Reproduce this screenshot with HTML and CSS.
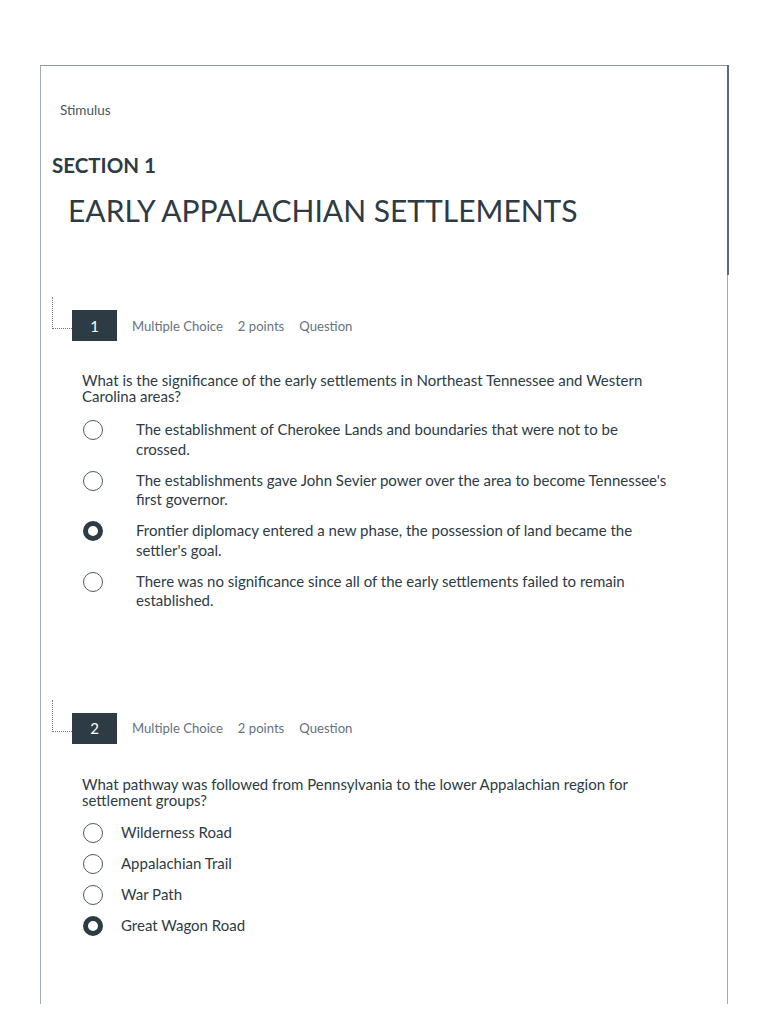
FILE: index.html
```html
<!DOCTYPE html>
<html lang="en">
<head>
<meta charset="utf-8">
<title>Early Appalachian Settlements</title>
<link rel="stylesheet" href="styles.css">
</head>
<body>
<div class="card">
  <div class="stimulus-label">Stimulus</div>
  <h2 class="section-label">SECTION 1</h2>
  <h1 class="section-title">EARLY APPALACHIAN SETTLEMENTS</h1>

  <section class="question q1">
    <div class="q-head">
      <span class="bracket"></span>
      <span class="q-num">1</span>
      <span class="q-meta">Multiple Choice</span>
      <span class="q-meta">2 points</span>
      <span class="q-meta">Question</span>
    </div>
    <p class="q-text">What is the significance of the early settlements in Northeast Tennessee and Western Carolina areas?</p>
    <ul class="options wide">
      <li class="option"><span class="radio"></span><span class="opt-text">The establishment of Cherokee Lands and boundaries that were not to be crossed.</span></li>
      <li class="option"><span class="radio"></span><span class="opt-text">The establishments gave John Sevier power over the area to become Tennessee's first governor.</span></li>
      <li class="option"><span class="radio checked"></span><span class="opt-text">Frontier diplomacy entered a new phase, the possession of land became the settler's goal.</span></li>
      <li class="option"><span class="radio"></span><span class="opt-text">There was no significance since all of the early settlements failed to remain established.</span></li>
    </ul>
  </section>

  <section class="question q2">
    <div class="q-head">
      <span class="bracket"></span>
      <span class="q-num">2</span>
      <span class="q-meta">Multiple Choice</span>
      <span class="q-meta">2 points</span>
      <span class="q-meta">Question</span>
    </div>
    <p class="q-text">What pathway was followed from Pennsylvania to the lower Appalachian region for settlement groups?</p>
    <ul class="options narrow">
      <li class="option"><span class="radio"></span><span class="opt-text">Wilderness Road</span></li>
      <li class="option"><span class="radio"></span><span class="opt-text">Appalachian Trail</span></li>
      <li class="option"><span class="radio"></span><span class="opt-text">War Path</span></li>
      <li class="option"><span class="radio checked"></span><span class="opt-text">Great Wagon Road</span></li>
    </ul>
  </section>
</div>
</body>
</html>
```

FILE: styles.css
```css
* { box-sizing: border-box; }

html, body {
  margin: 0;
  padding: 0;
  background: #ffffff;
}

body {
  font-family: Lato, "Open Sans", "Liberation Sans", sans-serif;
  color: #2d3b45;
}

.card {
  position: relative;
  margin: 65px 0 0 40px;
  width: 688px;
  height: 939px;
  border-top: 1px solid #8e989f;
  border-left: 1px solid #a3acb3;
  border-right: 1px solid #a3acb3;
}

.card::after {
  content: "";
  position: absolute;
  top: -1px;
  right: -2px;
  width: 2px;
  height: 210px;
  background: #5f6c76;
}

.stimulus-label {
  margin: 36px 0 0 19px;
  font-size: 13.5px;
  line-height: 16px;
  color: #4a5660;
}

.section-label {
  margin: 34px 0 0 11px;
  font-size: 20.5px;
  line-height: 26px;
  font-weight: 700;
  color: #2d3b45;
}

.section-title {
  margin: 14px 0 0 27px;
  font-size: 30px;
  line-height: 36px;
  font-weight: 400;
  color: #2d3b45;
}

.question {
  margin-left: 11px;
}

.q1 { margin-top: 69px; }
.q2 { margin-top: 89px; }

.q-head {
  display: flex;
  align-items: flex-start;
  height: 44px;
}

.bracket {
  width: 20px;
  height: 32px;
  border-left: 1px dotted #6f7a82;
  border-bottom: 1px dotted #6f7a82;
}

.q-num {
  margin-top: 13px;
  width: 45px;
  height: 31px;
  background: #2d3b45;
  color: #ffffff;
  font-size: 15px;
  display: flex;
  align-items: center;
  justify-content: center;
}

.q-meta {
  margin-top: 13px;
  height: 31px;
  display: flex;
  align-items: center;
  font-size: 13.1px;
  color: #65737d;
  margin-left: 15px;
}

.q-text {
  margin: 31px 0 0 30px;
  width: 590px;
  font-size: 15px;
  line-height: 16px;
  color: #2d3b45;
}

.q2 .q-text { margin-top: 32px; }

.options {
  list-style: none;
  margin: 16px 0 0 31px;
  padding: 0;
  display: flex;
  flex-direction: column;
  gap: 11.5px;
}

.q2 .options {
  margin-top: 15px;
  gap: 11px;
}

.option {
  display: flex;
  align-items: flex-start;
  font-size: 15px;
  line-height: 19.5px;
}

.radio {
  flex: none;
  width: 20px;
  height: 20px;
  border-radius: 50%;
  border: 1px solid #4e5b64;
  background: #ffffff;
}

.radio.checked {
  border: 5px solid #2d3b45;
}

.wide .opt-text {
  margin-left: 33px;
  width: 535px;
}

.narrow .opt-text {
  margin-left: 18px;
}
```
